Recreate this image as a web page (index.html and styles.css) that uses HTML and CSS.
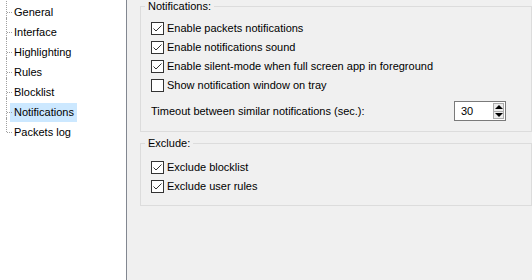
FILE: index.html
```html
<!DOCTYPE html>
<html lang="en">
<head>
    <meta charset="UTF-8">
    <title>Options - Notifications</title>
    <link rel="stylesheet" href="styles.css">
</head>
<body>
    <div class="window">
        <ul class="tree">
            <li><span class="node">General</span></li>
            <li><span class="node">Interface</span></li>
            <li><span class="node">Highlighting</span></li>
            <li><span class="node">Rules</span></li>
            <li><span class="node">Blocklist</span></li>
            <li><span class="node selected">Notifications</span></li>
            <li><span class="node">Packets log</span></li>
        </ul>
        <div class="page">
            <fieldset class="group">
                <legend>Notifications:</legend>
                <label class="check">
                    <span class="box"><svg width="11" height="11" viewBox="0 0 11 11"><polyline points="1.5,5.5 4,8 9.5,2.5" /></svg></span>
                    Enable packets notifications
                </label>
                <label class="check">
                    <span class="box"><svg width="11" height="11" viewBox="0 0 11 11"><polyline points="1.5,5.5 4,8 9.5,2.5" /></svg></span>
                    Enable notifications sound
                </label>
                <label class="check">
                    <span class="box"><svg width="11" height="11" viewBox="0 0 11 11"><polyline points="1.5,5.5 4,8 9.5,2.5" /></svg></span>
                    Enable silent-mode when full screen app in foreground
                </label>
                <label class="check">
                    <span class="box"></span>
                    Show notification window on tray
                </label>
                <div class="timeout">
                    <span>Timeout between similar notifications (sec.):</span>
                    <div class="spin">
                        <span class="spin-value">30</span>
                        <div class="spin-buttons">
                            <span class="spin-up"></span>
                            <span class="spin-down"></span>
                        </div>
                    </div>
                </div>
            </fieldset>
            <fieldset class="group exclude">
                <legend>Exclude:</legend>
                <label class="check">
                    <span class="box"><svg width="11" height="11" viewBox="0 0 11 11"><polyline points="1.5,5.5 4,8 9.5,2.5" /></svg></span>
                    Exclude blocklist
                </label>
                <label class="check">
                    <span class="box"><svg width="11" height="11" viewBox="0 0 11 11"><polyline points="1.5,5.5 4,8 9.5,2.5" /></svg></span>
                    Exclude user rules
                </label>
            </fieldset>
        </div>
    </div>
</body>
</html>
```

FILE: styles.css
```css
* {
    margin: 0;
    padding: 0;
    box-sizing: border-box;
}
body {
    font: 11px/13px "Liberation Sans", Arial, sans-serif;
    color: #000;
    background: #f0f0f0;
}
.window {
    display: flex;
    width: 532px;
    height: 280px;
}
.tree {
    list-style-type: none;
    width: 127px;
    height: 280px;
    padding-top: 2px;
    background: #fff;
    border-right: 1px solid #828790;
}
.tree li {
    position: relative;
    height: 20px;
    line-height: 20px;
}
.tree li::before {
    content: '';
    position: absolute;
    left: 6px;
    top: -4px;
    height: 24px;
    border-left: 1px dotted #a0a0a0;
}
.tree li:last-child::before {
    height: 14px;
}
.tree li::after {
    content: '';
    position: absolute;
    left: 7px;
    top: 10px;
    width: 5px;
    border-top: 1px dotted #a0a0a0;
}
.tree .node {
    display: inline-block;
    margin-left: 10px;
    padding: 0 3px 0 4px;
    height: 19px;
    line-height: 19px;
}
.tree .selected {
    background: #cce8ff;
}
.page {
    flex: 1;
    padding-left: 13px;
}
.group {
    border: 1px solid #dcdcdc;
    padding: 6px 0 10px 4px;
}
.group legend {
    padding: 0 3px;
    line-height: 13px;
}
.exclude {
    margin-top: 5px;
    padding-top: 8px;
    padding-bottom: 9px;
}
.check {
    display: flex;
    align-items: center;
    height: 19px;
    padding-left: 6px;
    gap: 3px;
}
.box {
    width: 13px;
    height: 13px;
    border: 1px solid #333;
    background: #fff;
    display: flex;
}
.box svg polyline {
    fill: none;
    stroke: #333;
    stroke-width: 1;
}
.timeout {
    display: flex;
    align-items: center;
    justify-content: space-between;
    margin-top: 6px;
    padding-left: 6px;
    padding-right: 25px;
}
.spin {
    display: flex;
    width: 52px;
    height: 20px;
    border: 1px solid #7a7a7a;
    background: #fff;
}
.spin-value {
    flex: 1;
    padding-left: 6px;
    line-height: 18px;
}
.spin-buttons {
    display: flex;
    flex-direction: column;
    width: 12px;
    padding: 1px 1px 1px 0;
}
.spin-up,
.spin-down {
    flex: 1;
    background: #ececec;
    border: 1px solid #acacac;
    display: flex;
    justify-content: center;
    align-items: center;
}
.spin-down {
    border-top: none;
}
.spin-up::after {
    content: '';
    border-left: 4px solid transparent;
    border-right: 4px solid transparent;
    border-bottom: 4px solid #000;
}
.spin-down::after {
    content: '';
    border-left: 4px solid transparent;
    border-right: 4px solid transparent;
    border-top: 4px solid #000;
}
```
